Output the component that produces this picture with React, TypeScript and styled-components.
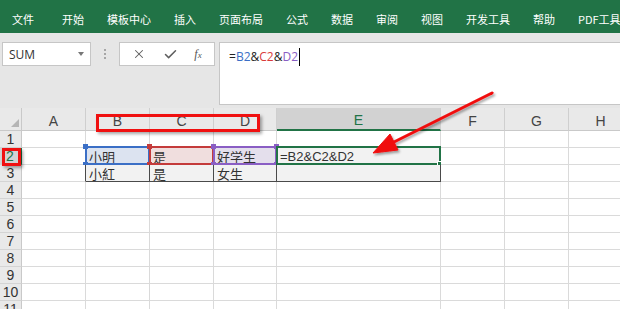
import React from 'react'
import styled, { createGlobalStyle } from 'styled-components'
import { X, Check } from 'lucide-react'

const GlobalStyle = createGlobalStyle`
  html, body { margin: 0; padding: 0; background: #e6e6e6; overflow: hidden; }
  * { box-sizing: border-box; }
`

const GREEN = '#217346'
const MENU = ['文件', '开始', '模板中心', '插入', '页面布局', '公式', '数据', '审阅', '视图', '开发工具', '帮助', 'PDF工具集']
const COLS = ['A', 'B', 'C', 'D', 'E', 'F', 'G', 'H']
const WIDTHS = [64, 64, 64, 63, 164, 64, 64, 64]

type Ref = { color: string; fill: string }
const REFS: Record<string, Ref> = {
  '2-1': { color: '#3b6fc6', fill: '#dce3f0' },
  '2-2': { color: '#c43b3b', fill: '#f0dede' },
  '2-3': { color: '#8a5ec4', fill: '#e4dfec' },
}
const DATA: Record<string, string> = {
  '2-1': '小明', '2-2': '是', '2-3': '好学生', '2-4': '=B2&C2&D2',
  '3-1': '小紅', '3-2': '是', '3-3': '女生',
}

const inTable = (r: number, c: number) => r >= 2 && r <= 3 && c >= 1 && c <= 4

const Page = styled.div`
  position: relative;
  width: 620px;
  height: 309px;
  overflow: hidden;
  background: #e6e6e6;
  font-family: "Liberation Sans", "Noto Sans CJK SC", sans-serif;
`

const Ribbon = styled.nav`
  display: flex;
  align-items: center;
  height: 33px;
  padding: 5px 0 0 12px;
  background: ${GREEN};
  gap: 23px;
  white-space: nowrap;
`

const MenuItem = styled.span<{ $first?: boolean }>`
  color: #fff;
  font: 11px "Noto Sans CJK SC", sans-serif;
  margin-right: ${p => (p.$first ? '5px' : '0')};
`

const FormulaBar = styled.div`
  display: flex;
  align-items: flex-start;
  height: 75px;
  padding: 9px 0 3px 2px;
`

const NameBox = styled.div`
  display: flex;
  align-items: center;
  justify-content: space-between;
  width: 89px;
  height: 24px;
  padding: 0 6px 0 6px;
  background: #fff;
  border: 1px solid #c6c6c6;
  font: 12px "Open Sans", sans-serif;
  color: #333;
`

const Caret = styled.span`
  width: 0;
  height: 0;
  border-left: 3.5px solid transparent;
  border-right: 3.5px solid transparent;
  border-top: 4px solid #777;
`

const Grip = styled.span`
  width: 28px;
  height: 24px;
  display: flex;
  flex-direction: column;
  align-items: center;
  justify-content: center;
  gap: 2px;
  & i { width: 2px; height: 2px; background: #a6a6a6; }
`

const ButtonBox = styled.div`
  display: flex;
  align-items: center;
  justify-content: space-around;
  width: 96px;
  height: 24px;
  padding: 0 4px;
  background: #fff;
  border: 1px solid #c6c6c6;
  color: #5e5e5e;
`

const Fx = styled.span`
  font: italic 12px "Liberation Serif", serif;
  color: #555;
  & small { font-size: 9px; }
`

const FormulaInput = styled.div`
  flex: 1;
  height: 63px;
  margin-left: 4px;
  padding: 5px 9px;
  background: #fff;
  border: 1px solid #c6c6c6;
  border-right: none;
  font: 12px "Open Sans", sans-serif;
  color: #222;
  display: flex;
  align-items: flex-start;
`

const Tok = styled.span<{ $c?: string }>`
  color: ${p => p.$c || '#222'};
`

const Cursor = styled.span`
  display: inline-block;
  width: 1px;
  height: 18px;
  margin-left: 1px;
  background: #000;
`

const Sheet = styled.div`
  display: grid;
  grid-template-columns: 22px ${WIDTHS.map(w => w + 'px').join(' ')};
  grid-template-rows: 23px repeat(11, 17px);
  background: #fff;
`

const Corner = styled.div`
  position: relative;
  background: #e9e9e9;
  border-right: 1px solid #c9c9c9;
  border-bottom: 1px solid #c9c9c9;
  &::after {
    content: '';
    position: absolute;
    right: 2px;
    bottom: 3px;
    border-left: 8px solid transparent;
    border-bottom: 8px solid #b5b5b5;
  }
`

const ColHead = styled.div<{ $sel?: boolean }>`
  display: flex;
  align-items: flex-end;
  justify-content: center;
  padding-bottom: 1px;
  background: ${p => (p.$sel ? '#d2d2d2' : '#e9e9e9')};
  border-right: 1px solid #cfcfcf;
  border-bottom: ${p => (p.$sel ? `2px solid ${GREEN}` : '1px solid #c9c9c9')};
  color: ${p => (p.$sel ? GREEN : '#444')};
  font: 14px "Liberation Sans", sans-serif;
`

const RowHead = styled.div<{ $sel?: boolean }>`
  display: flex;
  align-items: center;
  justify-content: center;
  background: ${p => (p.$sel ? '#d2d2d2' : '#e9e9e9')};
  border-right: ${p => (p.$sel ? `2px solid ${GREEN}` : '1px solid #c9c9c9')};
  border-bottom: 1px solid #d4d4d4;
  color: ${p => (p.$sel ? GREEN : '#333')};
  font: 14px "Liberation Sans", sans-serif;
`

const Cell = styled.div<{ $fill?: string; $darkR?: boolean; $darkB?: boolean }>`
  position: relative;
  display: flex;
  align-items: center;
  padding-left: 3px;
  background: ${p => p.$fill || '#fff'};
  border-right: 1px solid ${p => (p.$darkR ? '#4a4a4a' : '#dadada')};
  border-bottom: 1px solid ${p => (p.$darkB ? '#4a4a4a' : '#dadada')};
  font: 13px "Liberation Sans", "Noto Sans CJK SC", sans-serif;
  color: #333;
  white-space: nowrap;
`

const RefBox = styled.span<{ $c: string }>`
  position: absolute;
  top: -2px;
  left: -1px;
  right: -1px;
  bottom: -1px;
  border: 2px solid ${p => p.$c};
  pointer-events: none;
`

const Handle = styled.span<{ $c: string; $x: 'l' | 'r'; $y: 't' | 'b' }>`
  position: absolute;
  width: 5px;
  height: 5px;
  background: ${p => p.$c};
  ${p => (p.$x === 'l' ? 'left: -4px;' : 'right: -4px;')}
  ${p => (p.$y === 't' ? 'top: -4px;' : 'bottom: -4px;')}
`

const FillHandle = styled.span`
  position: absolute;
  right: -4px;
  bottom: -4px;
  width: 6px;
  height: 6px;
  background: ${GREEN};
  border: 1px solid #fff;
`

const Marker = styled.div<{ $l: number; $t: number; $w: number; $h: number }>`
  position: absolute;
  left: ${p => p.$l}px;
  top: ${p => p.$t}px;
  width: ${p => p.$w}px;
  height: ${p => p.$h}px;
  border: 3px solid #f01010;
  box-shadow: 2px 2px 3px rgba(0, 0, 0, 0.35);
  pointer-events: none;
`

const ArrowLayer = styled.svg`
  position: absolute;
  left: 0;
  top: 0;
  pointer-events: none;
`

const SheetCell = ({ r, c }: { r: number; c: number }) => {
  const key = `${r}-${c}`
  const ref = REFS[key]
  const active = r === 2 && c === 4
  const tableFill = inTable(r, c) ? '#f2f2f2' : undefined
  return (
    <Cell
      $fill={ref ? ref.fill : tableFill}
      $darkR={inTable(r, c) || inTable(r, c + 1)}
      $darkB={inTable(r, c) || inTable(r + 1, c)}
    >
      {DATA[key]}
      {ref && (
        <RefBox $c={ref.color}>
          <Handle $c={ref.color} $x="l" $y="t" />
          <Handle $c={ref.color} $x="r" $y="t" />
          <Handle $c={ref.color} $x="l" $y="b" />
          <Handle $c={ref.color} $x="r" $y="b" />
        </RefBox>
      )}
      {active && (
        <RefBox $c={GREEN}>
          <FillHandle />
        </RefBox>
      )}
    </Cell>
  )
}

const App = () => {
  const rows = Array.from({ length: 11 }, (_, i) => i + 1)
  return (
    <Page>
      <GlobalStyle />
      <Ribbon>
        {MENU.map((m, i) => (
          <MenuItem key={m} $first={i === 0}>{m}</MenuItem>
        ))}
      </Ribbon>

      <FormulaBar>
        <NameBox>
          <span>SUM</span>
          <Caret />
        </NameBox>
        <Grip><i /><i /><i /></Grip>
        <ButtonBox>
          <X size={14} strokeWidth={1.8} />
          <Check size={15} strokeWidth={2.4} />
          <Fx>f<small>x</small></Fx>
        </ButtonBox>
        <FormulaInput>
          <Tok>=</Tok>
          <Tok $c="#3b6fc6">B2</Tok>
          <Tok>&amp;</Tok>
          <Tok $c="#d93a3a">C2</Tok>
          <Tok>&amp;</Tok>
          <Tok $c="#8a5ec4">D2</Tok>
          <Cursor />
        </FormulaInput>
      </FormulaBar>

      <Sheet>
        <Corner />
        {COLS.map(c => (
          <ColHead key={c} $sel={c === 'E'}>{c}</ColHead>
        ))}
        {rows.map(r => (
          <React.Fragment key={r}>
            <RowHead $sel={r === 2}>{r}</RowHead>
            {COLS.map((_, c) => (
              <SheetCell key={c} r={r} c={c} />
            ))}
          </React.Fragment>
        ))}
      </Sheet>

      <Marker $l={96} $t={114} $w={164} $h={18} />
      <Marker $l={2} $t={148} $w={19} $h={18} />

      <ArrowLayer width="620" height="309" viewBox="0 0 620 309">
        <defs>
          <filter id="sh" x="-20%" y="-20%" width="140%" height="140%">
            <feDropShadow dx="1.5" dy="2" stdDeviation="1.2" floodColor="#000" floodOpacity="0.35" />
          </filter>
        </defs>
        <g filter="url(#sh)" fill="#f01010" stroke="#f01010">
          <line x1="492" y1="93" x2="392" y2="143" strokeWidth="3" strokeLinecap="round" />
          <polygon points="373,153 398,150 390,134" strokeWidth="1" strokeLinejoin="round" />
        </g>
      </ArrowLayer>
    </Page>
  )
}

export default App
